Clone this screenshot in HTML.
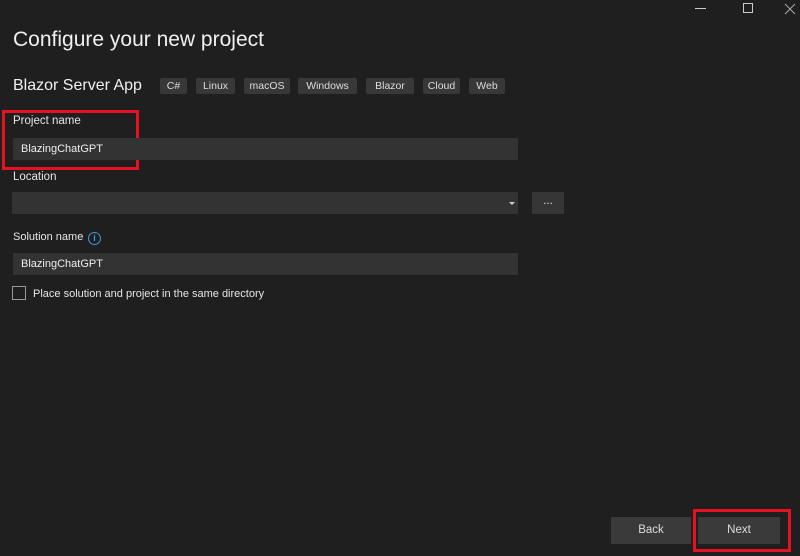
<!DOCTYPE html>
<html><head><style>
*{margin:0;padding:0;box-sizing:border-box}
body{width:800px;height:556px;background:#1f1f1f;font-family:"Liberation Sans",sans-serif;color:#e0e0e0;position:relative;overflow:hidden}
.a{position:absolute}
.tag{position:absolute;top:78px;height:16px;background:#383838;border-radius:2px;font-size:10.5px;line-height:16px;text-align:center;color:#ddd}
.lbl{font-size:11.5px;color:#e6e6e6}
.inp{position:absolute;background:#333;height:22px;font-size:11px;line-height:22px;padding-left:8px;color:#eee}
.btn{position:absolute;background:#3a3a3a;font-size:11.5px;color:#ddd;text-align:center;line-height:27px;height:27px}
.red{position:absolute;border:3px solid #e81123}
</style></head><body>
<div class="a" style="left:695px;top:8px;width:11px;height:1px;background:#ccc"></div>
<div class="a" style="left:743px;top:3px;width:10px;height:10px;border:1px solid #ccc"></div>
<svg class="a" style="left:784px;top:3px" width="12" height="12"><path d="M1 1L11 11M11 1L1 11" stroke="#aaa" stroke-width="1"/></svg>
<div class="a" style="left:13px;top:28px;font-size:21px;color:#f0f0f0">Configure your new project</div>
<div class="a" style="left:13px;top:77px;font-size:16px;color:#f0f0f0">Blazor Server App</div>
<div class="tag" style="left:160px;width:27px">C#</div>
<div class="tag" style="left:196px;width:39px">Linux</div>
<div class="tag" style="left:244px;width:46px">macOS</div>
<div class="tag" style="left:298px;width:59px">Windows</div>
<div class="tag" style="left:366px;width:48px">Blazor</div>
<div class="tag" style="left:423px;width:37px">Cloud</div>
<div class="tag" style="left:469px;width:36px">Web</div>
<div class="red" style="left:2px;top:110px;width:137px;height:60px"></div>
<div class="a lbl" style="left:13px;top:115px">Project name</div>
<div class="inp" style="left:13px;top:138px;width:505px">BlazingChatGPT</div>
<div class="a lbl" style="left:13px;top:171px">Location</div>
<div class="inp" style="left:12px;top:192px;width:506px"></div>
<div class="a" style="left:509px;top:202px;border-left:3px solid transparent;border-right:3px solid transparent;border-top:3px solid #ccc"></div>
<div class="btn" style="left:532px;top:192px;width:32px;height:22px;line-height:18px;background:#363636">...</div>
<div class="a lbl" style="left:13px;top:231px;font-size:11px">Solution name</div>
<div class="a" style="left:88px;top:232px;width:13px;height:13px;border:1.5px solid #3b9ad9;border-radius:50%;color:#3b9ad9;font-size:9px;font-weight:bold;text-align:center;line-height:10px">i</div>
<div class="inp" style="left:13px;top:253px;width:505px">BlazingChatGPT</div>
<div class="a" style="left:12px;top:286px;width:14px;height:14px;border:1px solid #999"></div>
<div class="a lbl" style="left:33px;top:288px;font-size:11px">Place solution and project in the same directory</div>
<div class="btn" style="left:611px;top:517px;width:80px">Back</div>
<div class="btn" style="left:698px;top:517px;width:82px">Next</div>
<div class="red" style="left:693px;top:509px;width:98px;height:43px"></div>
</body></html>
